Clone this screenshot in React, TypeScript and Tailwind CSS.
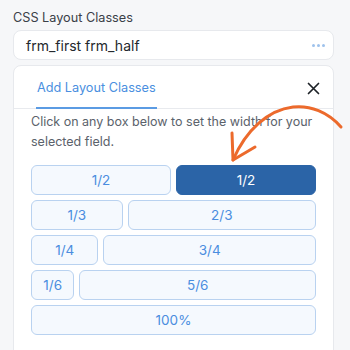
import React from "react";

const rows: { label: string; span: string; active?: boolean }[][] = [
  [
    { label: "1/2", span: "col-span-6" },
    { label: "1/2", span: "col-span-6", active: true },
  ],
  [
    { label: "1/3", span: "col-span-4" },
    { label: "2/3", span: "col-span-8" },
  ],
  [
    { label: "1/4", span: "col-span-3" },
    { label: "3/4", span: "col-span-9" },
  ],
  [
    { label: "1/6", span: "col-span-2" },
    { label: "5/6", span: "col-span-10" },
  ],
  [{ label: "100%", span: "col-span-12" }],
];

export default function App() {
  const items = rows.flat();
  return (
    <div
      className="relative w-[350px] h-[350px] overflow-hidden bg-[#f6f7f9] pl-[13px] pr-[16px] pt-[8px]"
      style={{ fontFamily: "Inter, 'Liberation Sans', sans-serif" }}
    >
      <div className="text-[12.7px] leading-[20px] text-[#3a4048]">CSS Layout Classes</div>
      <div className="mt-[2px] h-[30px] rounded-[8px] bg-white border border-[#e7e9ed] pl-[12px] pr-[8px] flex items-center justify-between">
        <span className="text-[14px] text-[#23282d]">frm_first frm_half</span>
        <span className="flex gap-[2px]">
          <span className="w-[3px] h-[3px] rounded-full bg-[#9ec2ec]" />
          <span className="w-[3px] h-[3px] rounded-full bg-[#9ec2ec]" />
          <span className="w-[3px] h-[3px] rounded-full bg-[#9ec2ec]" />
        </span>
      </div>
      <div className="mt-[5px] h-[320px] rounded-t-[8px] bg-white border border-[#e7e9ed]">
        <div className="h-[43px] flex items-stretch justify-between pl-[22px] pr-[13px] border-b border-[#e8eaee]">
          <div className="flex items-center border-b-2 border-[#5b9be3] px-[1px] pt-[2px] -mb-px">
            <span className="text-[12.7px] text-[#4a8fe0]">Add Layout Classes</span>
          </div>
          <div className="flex items-center pt-[2px]">
            <svg width="13" height="13" viewBox="0 0 13 13">
              <path d="M1.5 1.5L11.5 11.5M11.5 1.5L1.5 11.5" stroke="#1d2227" strokeWidth="1.7" strokeLinecap="round" />
            </svg>
          </div>
        </div>
        <div className="px-[17px]">
          <p className="mt-[3px] text-[12.5px] leading-[19.5px] text-[#5b626b]">
            Click on any box below to set the width for your selected field.
          </p>
          <div className="mt-[14px] grid grid-cols-12 gap-[5px]">
            {items.map((it, i) => (
              <div
                key={i}
                className={
                  it.span +
                  " h-[30px] rounded-[6px] flex items-center justify-center text-[13.5px] " +
                  (it.active
                    ? "bg-[#2b64a7] text-white border border-[#2b64a7]"
                    : "bg-[#f5f9fe] text-[#4a8ddf] border border-[#b9d2f0]")
                }
              >
                {it.label}
              </div>
            ))}
          </div>
        </div>
      </div>
      <svg
        className="absolute left-0 top-0 pointer-events-none"
        width="350"
        height="350"
        viewBox="0 0 350 350"
      >
        <path
          d="M341 127 C 328 112, 310 105, 293 107 C 268 110, 246 130, 233 160"
          fill="none"
          stroke="#ec6a2c"
          strokeWidth="3"
          strokeLinecap="round"
        />
        <path
          d="M232 133 L233 160 L255 147"
          fill="none"
          stroke="#ec6a2c"
          strokeWidth="3"
          strokeLinecap="round"
          strokeLinejoin="round"
        />
      </svg>
    </div>
  );
}
